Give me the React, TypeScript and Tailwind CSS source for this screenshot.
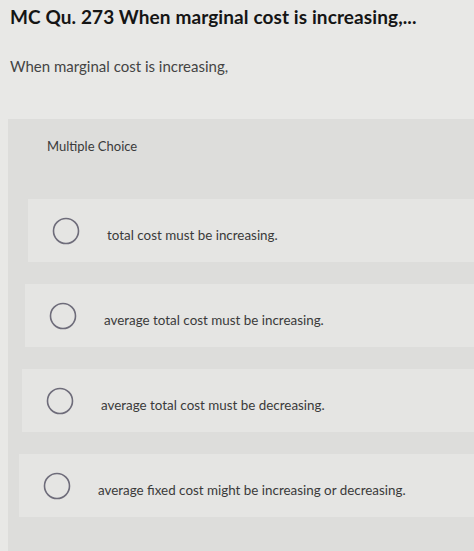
const options = [
  { text: "total cost must be increasing.", indent: "ml-[20px]" },
  { text: "average total cost must be increasing.", indent: "ml-[17px]" },
  { text: "average total cost must be decreasing.", indent: "ml-[14px]" },
  { text: "average fixed cost might be increasing or decreasing.", indent: "ml-[11px]" },
];

const Radio = () => (
  <svg width="28" height="28" viewBox="0 0 28 28" className="shrink-0">
    <circle cx="14" cy="14" r="12.5" fill="none" stroke="#6e6c7a" strokeWidth="1.6" />
  </svg>
);

const App = () => {
  return (
    <div
      className="w-[474px] h-[551px] overflow-hidden bg-[#e8e8e6] text-[#3b3b3b]"
      style={{ fontFamily: "Lato, 'Open Sans', sans-serif" }}
    >
      <h1 className="pt-[5px] pl-[10px] text-[19px] leading-[24px] font-bold text-[#151515] tracking-[0.1px]">
        MC Qu. 273 When marginal cost is increasing,...
      </h1>
      <p className="mt-[27px] pl-[10px] text-[15px] leading-[20px] text-[#444]">
        When marginal cost is increasing,
      </p>

      <div className="mt-[43px] ml-[8px] h-[440px] bg-[#dddddb] pt-[18px]">
        <div className="pl-[39px] text-[13px] leading-[18px] text-[#3a3a3a]">Multiple Choice</div>

        <div className="mt-[44px] flex flex-col gap-[22px]">
          {options.map((o) => (
            <div key={o.text} className={`${o.indent} h-[63px] bg-[#e5e5e3] flex items-center`}>
              <div className="pl-[24px] pr-[27px] flex items-center">
                <Radio />
              </div>
              <span className="text-[13.4px] leading-[18px] mt-[8px] text-[#3a3a3a]">{o.text}</span>
            </div>
          ))}
        </div>
      </div>
    </div>
  );
};

export default App;
